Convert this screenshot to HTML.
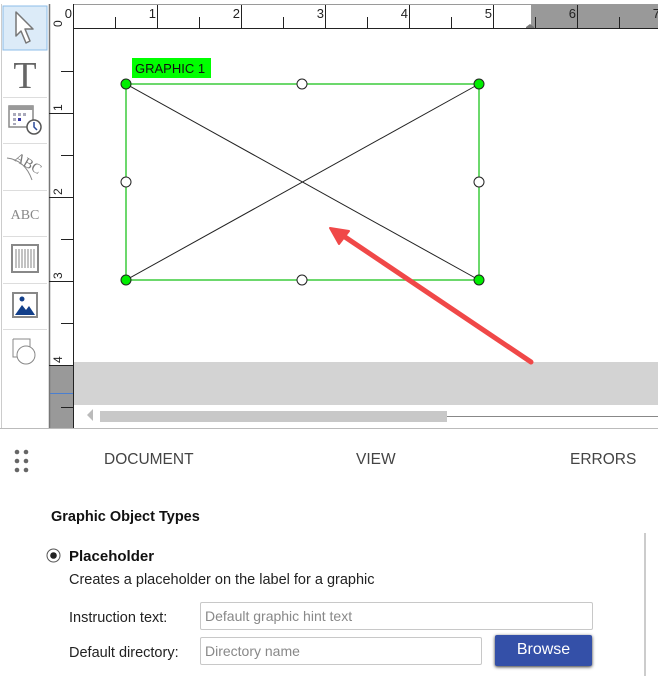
<!DOCTYPE html>
<html><head><meta charset="utf-8"><style>
body{margin:0;width:658px;height:676px;overflow:hidden;background:#fff;font-family:"Liberation Sans",sans-serif;position:relative}
.a{position:absolute}
.tab{position:absolute;top:451px;font-size:15.5px;color:#444}
.lbl{position:absolute;font-size:14.5px;color:#222}
.inp{position:absolute;border:1px solid #c8c8c8;border-radius:2px;font-size:14px;color:#888;padding-left:4px;box-sizing:border-box;line-height:26px}
</style></head><body>
<svg class="a" style="left:0;top:0" width="658" height="430" viewBox="0 0 658 430">
<rect x="0" y="0" width="658" height="4" fill="#fff"/>
<line x1="0" y1="4.5" x2="658" y2="4.5" stroke="#9a9a9a"/>
<rect x="0" y="4" width="49" height="424" fill="#fff"/>
<line x1="1.5" y1="4" x2="1.5" y2="428" stroke="#ccc"/>
<rect x="3" y="6" width="44" height="44" fill="#dcebf8" stroke="#8cbde8"/>
<g stroke="#ddd"><line x1="3" y1="97.5" x2="47" y2="97.5"/><line x1="3" y1="143.5" x2="47" y2="143.5"/><line x1="3" y1="190.5" x2="47" y2="190.5"/><line x1="3" y1="236.5" x2="47" y2="236.5"/><line x1="3" y1="283.5" x2="47" y2="283.5"/><line x1="3" y1="329.5" x2="47" y2="329.5"/></g>
<path d="M16 12 L16 36 L21 31 L26 43 L30 41 L25 29 L33 29 Z" fill="#fff" stroke="#777" stroke-width="1.5" stroke-linejoin="round"/>
<text x="25" y="88" font-family="Liberation Serif" font-size="38" fill="#666" text-anchor="middle">T</text>
<rect x="9" y="106" width="24" height="21" fill="#fff" stroke="#888" stroke-width="1.5"/>
<rect x="9" y="106" width="24" height="4" fill="#999"/>
<g fill="#aab"><rect x="13" y="113" width="3" height="3"/><rect x="18" y="113" width="3" height="3"/><rect x="23" y="113" width="3" height="3"/><rect x="13" y="118" width="3" height="3"/><rect x="18" y="118" width="3" height="3" fill="#33a"/><rect x="13" y="123" width="3" height="2"/></g>
<circle cx="34" cy="127" r="7" fill="#fff" stroke="#555" stroke-width="1.5"/><path d="M34 122 V127 L37 130" stroke="#2a4a9a" fill="none" stroke-width="1.5"/>
<text x="12" y="165" font-family="Liberation Serif" font-size="14" fill="#777" transform="rotate(30 22 165)">ABC</text>
<path d="M7 158 Q25 160 32 180" stroke="#888" fill="none"/>
<text x="25" y="219" font-family="Liberation Serif" font-size="14" fill="#888" text-anchor="middle">ABC</text>
<rect x="12" y="245" width="26" height="27" fill="#fff" stroke="#888" stroke-width="2"/>
<g stroke="#999" stroke-width="1.2"><line x1="16" y1="249" x2="16" y2="268"/><line x1="19" y1="249" x2="19" y2="268"/><line x1="22" y1="249" x2="22" y2="268"/><line x1="25" y1="249" x2="25" y2="268"/><line x1="28" y1="249" x2="28" y2="268"/><line x1="31" y1="249" x2="31" y2="268"/><line x1="34" y1="249" x2="34" y2="268"/></g>
<rect x="13" y="293" width="24" height="24" fill="#fff" stroke="#888" stroke-width="2"/>
<circle cx="22" cy="299" r="2.5" fill="#123f8a"/><path d="M15 315 L22 305 L26 310 L29 306 L35 315 Z" fill="#123f8a"/>
<path d="M13 339 H30 V348" stroke="#888" fill="none"/><path d="M13 339 V357 H18" stroke="#888" fill="none"/>
<circle cx="26" cy="355" r="9" fill="#fff" stroke="#888"/>
<rect x="49" y="4" width="25" height="424" fill="#fff"/>
<rect x="49" y="365" width="25" height="63" fill="#999"/>
<line x1="49" y1="393.5" x2="74" y2="393.5" stroke="#4a7fd0"/>
<line x1="49.5" y1="4" x2="49.5" y2="428" stroke="#777" stroke-width="1.5"/>
<line x1="73.5" y1="4" x2="73.5" y2="428" stroke="#222"/>
<g stroke="#222"><line x1="61" y1="71.5" x2="74" y2="71.5"/><line x1="49" y1="113.5" x2="74" y2="113.5"/><line x1="61" y1="155.5" x2="74" y2="155.5"/><line x1="49" y1="197.5" x2="74" y2="197.5"/><line x1="61" y1="239.5" x2="74" y2="239.5"/><line x1="49" y1="281.5" x2="74" y2="281.5"/><line x1="61" y1="323.5" x2="74" y2="323.5"/><line x1="49" y1="365.5" x2="74" y2="365.5"/><line x1="61" y1="407.5" x2="74" y2="407.5"/></g>
<g font-size="12" fill="#222">
<text transform="translate(62,111) rotate(-90)">1</text>
<text transform="translate(62,195) rotate(-90)">2</text>
<text transform="translate(62,279) rotate(-90)">3</text>
<text transform="translate(62,363) rotate(-90)">4</text>
<text transform="translate(62,27) rotate(-90)">0</text>
</g>
<rect x="74" y="5" width="584" height="24" fill="#fff"/>
<rect x="531" y="5" width="127" height="24" fill="#999"/>
<path d="M526 31 L526 27 L530 24 L534 27 L534 31 Z" fill="#777"/>
<line x1="74" y1="28.5" x2="658" y2="28.5" stroke="#222"/>
<g stroke="#222"><line x1="73.5" y1="5" x2="73.5" y2="29"/><line x1="115.5" y1="17" x2="115.5" y2="29"/><line x1="157.5" y1="5" x2="157.5" y2="29"/><line x1="199.5" y1="17" x2="199.5" y2="29"/><line x1="241.5" y1="5" x2="241.5" y2="29"/><line x1="283.5" y1="17" x2="283.5" y2="29"/><line x1="325.5" y1="5" x2="325.5" y2="29"/><line x1="367.5" y1="17" x2="367.5" y2="29"/><line x1="409.5" y1="5" x2="409.5" y2="29"/><line x1="451.5" y1="17" x2="451.5" y2="29"/><line x1="493.5" y1="5" x2="493.5" y2="29"/><line x1="535.5" y1="17" x2="535.5" y2="29"/><line x1="577.5" y1="5" x2="577.5" y2="29"/><line x1="619.5" y1="17" x2="619.5" y2="29"/></g>
<g font-size="13" fill="#222" text-anchor="end"><text x="72" y="18">0</text><text x="156" y="18">1</text><text x="240" y="18">2</text><text x="324" y="18">3</text><text x="408" y="18">4</text><text x="492" y="18">5</text><text x="576" y="18">6</text><text x="660" y="18">7</text></g>
<rect x="74" y="29" width="584" height="333" fill="#fff"/>
<rect x="74" y="362" width="584" height="43" fill="#d3d3d3"/>
<rect x="74" y="405" width="584" height="23" fill="#fff"/>
<path d="M93 409 L87 415 L93 421 Z" fill="#bbb"/>
<rect x="100" y="411" width="347" height="11" fill="#c8c8c8"/>
<line x1="447" y1="416.5" x2="658" y2="416.5" stroke="#888"/>
<line x1="0" y1="428.5" x2="658" y2="428.5" stroke="#bbb"/>
<rect x="132" y="58" width="79" height="20" fill="#00ff00"/>
<text x="135" y="73" font-size="13" fill="#111">GRAPHIC 1</text>
<line x1="126" y1="84" x2="479" y2="280" stroke="#222"/>
<line x1="479" y1="84" x2="126" y2="280" stroke="#222"/>
<rect x="126" y="84" width="353" height="196" fill="none" stroke="#3ccc3c" stroke-width="1.5"/>
<g stroke="#222" stroke-width="1"><circle cx="126" cy="84" r="5" fill="#00ee00"/><circle cx="479" cy="84" r="5" fill="#00ee00"/><circle cx="126" cy="280" r="5" fill="#00ee00"/><circle cx="479" cy="280" r="5" fill="#00ee00"/><circle cx="302" cy="84" r="5" fill="#fff"/><circle cx="302" cy="280" r="5" fill="#fff"/><circle cx="126" cy="182" r="5" fill="#fff"/><circle cx="479" cy="182" r="5" fill="#fff"/></g>
<line x1="531" y1="362" x2="345" y2="237" stroke="#f04848" stroke-width="5" stroke-linecap="round"/>
<path d="M330 228 L349 231 L339 244 Z" fill="#f04848" stroke="#f04848" stroke-width="2" stroke-linejoin="round"/>
</svg>
<svg class="a" style="left:14px;top:449px" width="18" height="26"><g fill="#666"><circle cx="3" cy="3" r="2.3"/><circle cx="12" cy="3" r="2.3"/><circle cx="3" cy="12" r="2.3"/><circle cx="12" cy="12" r="2.3"/><circle cx="3" cy="21" r="2.3"/><circle cx="12" cy="21" r="2.3"/></g></svg>
<div class="tab" style="left:104px">DOCUMENT</div>
<div class="tab" style="left:356px">VIEW</div>
<div class="tab" style="left:570px">ERRORS</div>
<div class="lbl" style="left:51px;top:509px;font-weight:bold;font-size:14.5px;color:#111">Graphic Object Types</div>
<svg class="a" style="left:46px;top:548px" width="16" height="16"><circle cx="7.5" cy="7.5" r="6.5" fill="#fff" stroke="#555"/><circle cx="7.5" cy="7.5" r="3.3" fill="#222"/></svg>
<div class="lbl" style="left:69px;top:548px;font-weight:bold;font-size:15px;color:#111">Placeholder</div>
<div class="lbl" style="left:69px;top:572px">Creates a placeholder on the label for a graphic</div>
<div class="lbl" style="left:69px;top:610px">Instruction text:</div>
<div class="lbl" style="left:69px;top:645px">Default directory:</div>
<div class="inp" style="left:200px;top:602px;width:393px;height:28px">Default graphic hint text</div>
<div class="inp" style="left:200px;top:637px;width:282px;height:28px">Directory name</div>
<div class="a" style="left:495px;top:635px;width:97px;height:31px;background:#3450a8;border-radius:2px;box-shadow:0 1px 3px #333;color:#fff;font-size:16px;text-align:center;line-height:30px">Browse</div>
<div class="a" style="left:644px;top:533px;width:2px;height:143px;background:#ccc"></div>
</body></html>
